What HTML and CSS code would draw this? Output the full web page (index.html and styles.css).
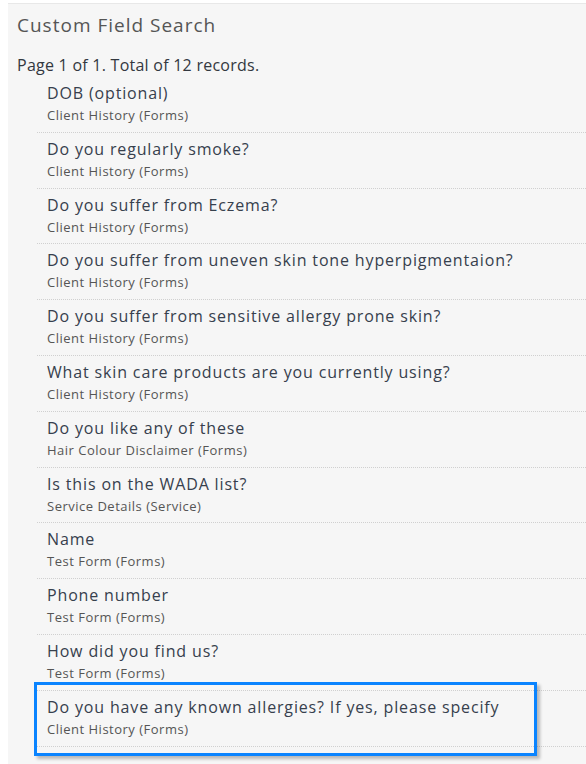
FILE: index.html
```html
<!DOCTYPE html>
<html>
<head>
<meta charset="utf-8">
<link rel="stylesheet" href="styles.css">
</head>
<body>
<div class="panel">
  <h1 class="title">Custom Field Search</h1>
  <p class="summary">Page 1 of 1. Total of 12 records.</p>
  <ul class="results">
    <li class="row"><div class="name">DOB (optional)</div><div class="source">Client History (Forms)</div></li>
    <li class="row"><div class="name">Do you regularly smoke?</div><div class="source">Client History (Forms)</div></li>
    <li class="row"><div class="name">Do you suffer from Eczema?</div><div class="source">Client History (Forms)</div></li>
    <li class="row"><div class="name">Do you suffer from uneven skin tone hyperpigmentaion?</div><div class="source">Client History (Forms)</div></li>
    <li class="row"><div class="name">Do you suffer from sensitive allergy prone skin?</div><div class="source">Client History (Forms)</div></li>
    <li class="row"><div class="name">What skin care products are you currently using?</div><div class="source">Client History (Forms)</div></li>
    <li class="row"><div class="name">Do you like any of these</div><div class="source">Hair Colour Disclaimer (Forms)</div></li>
    <li class="row"><div class="name">Is this on the WADA list?</div><div class="source">Service Details (Service)</div></li>
    <li class="row"><div class="name">Name</div><div class="source">Test Form (Forms)</div></li>
    <li class="row"><div class="name">Phone number</div><div class="source">Test Form (Forms)</div></li>
    <li class="row"><div class="name">How did you find us?</div><div class="source">Test Form (Forms)</div></li>
    <li class="row"><div class="name">Do you have any known allergies? If yes, please specify</div><div class="source">Client History (Forms)</div></li>
  </ul>
  <div class="highlight"></div>
</div>
</body>
</html>
```
FILE: styles.css
```css
html, body {
  margin: 0;
  padding: 0;
  background: #ffffff;
  font-family: "Open Sans", "Noto Sans", sans-serif;
}
.panel {
  position: relative;
  margin: 3px 0 0 8px;
  padding: 0 0 0 9px;
  background: #f6f6f6;
  border-top: 1px solid #e8e8e8;
  height: 760px;
  overflow: hidden;
}
.title {
  margin: 0;
  padding-top: 8px;
  font-size: 19px;
  line-height: 27px;
  font-weight: 400;
  letter-spacing: 1px;
  color: #555555;
}
.summary {
  margin: 0;
  padding-top: 14px;
  font-size: 16px;
  line-height: 24px;
  letter-spacing: 0.25px;
  color: #333840;
}
.results {
  list-style: none;
  margin: 0;
  padding: 0 0 0 20px;
}
.row {
  padding: 4px 0 6.8px 10px;
  border-bottom: 1px dotted #d0d0d0;
}
.name {
  font-size: 16px;
  line-height: 24px;
  letter-spacing: 0.85px;
  color: #37404d;
}
.source {
  font-size: 13px;
  line-height: 20px;
  letter-spacing: 0.5px;
  color: #555555;
}
.highlight {
  position: absolute;
  left: 26px;
  top: 678px;
  width: 497px;
  height: 68px;
  border: 3px solid #0a84ff;
  box-shadow: 3px 3px 3px rgba(0,0,0,0.25);
}
```
